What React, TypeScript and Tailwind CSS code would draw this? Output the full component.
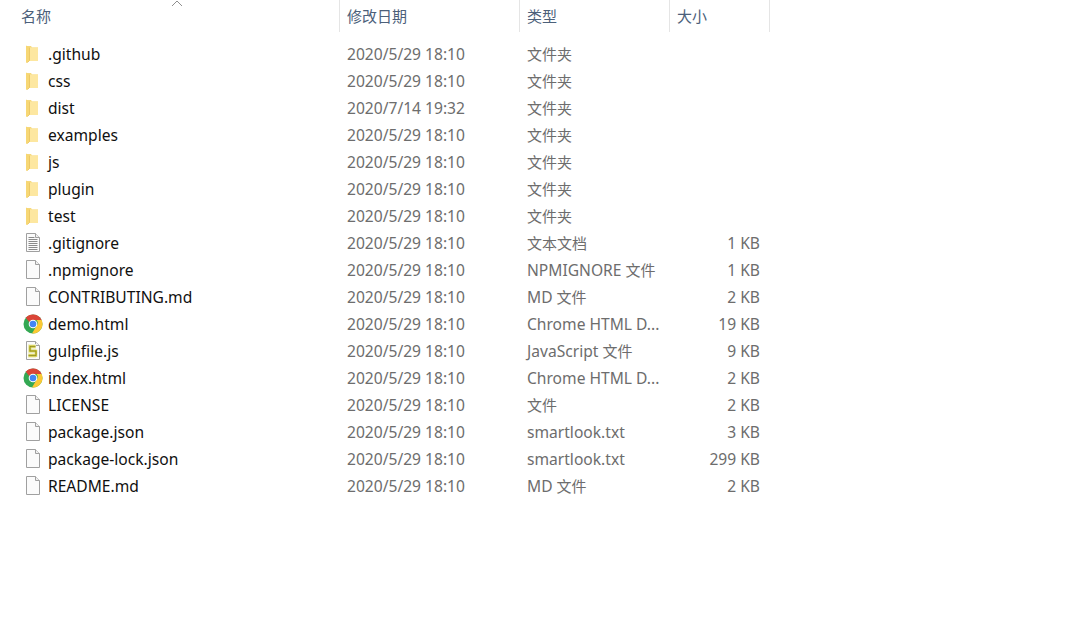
const FONT = "font-['Noto_Sans','Noto_Sans_CJK_SC',sans-serif]";

type Kind = "folder" | "lines" | "blank" | "chrome" | "js";
const rows: [string, string, string, string, Kind][] = [
  [".github", "2020/5/29 18:10", "文件夹", "", "folder"],
  ["css", "2020/5/29 18:10", "文件夹", "", "folder"],
  ["dist", "2020/7/14 19:32", "文件夹", "", "folder"],
  ["examples", "2020/5/29 18:10", "文件夹", "", "folder"],
  ["js", "2020/5/29 18:10", "文件夹", "", "folder"],
  ["plugin", "2020/5/29 18:10", "文件夹", "", "folder"],
  ["test", "2020/5/29 18:10", "文件夹", "", "folder"],
  [".gitignore", "2020/5/29 18:10", "文本文档", "1 KB", "lines"],
  [".npmignore", "2020/5/29 18:10", "NPMIGNORE 文件", "1 KB", "blank"],
  ["CONTRIBUTING.md", "2020/5/29 18:10", "MD 文件", "2 KB", "blank"],
  ["demo.html", "2020/5/29 18:10", "Chrome HTML D...", "19 KB", "chrome"],
  ["gulpfile.js", "2020/5/29 18:10", "JavaScript 文件", "9 KB", "js"],
  ["index.html", "2020/5/29 18:10", "Chrome HTML D...", "2 KB", "chrome"],
  ["LICENSE", "2020/5/29 18:10", "文件", "2 KB", "blank"],
  ["package.json", "2020/5/29 18:10", "smartlook.txt", "3 KB", "blank"],
  ["package-lock.json", "2020/5/29 18:10", "smartlook.txt", "299 KB", "blank"],
  ["README.md", "2020/5/29 18:10", "MD 文件", "2 KB", "blank"],
];

function Mixed({ text }: { text: string }) {
  const parts = text.split(/([\u4e00-\u9fff]+)/);
  return (
    <span className="text-[15.6px] leading-[20px] -translate-y-[1px] inline-block">
      {parts.map((p, i) =>
        i % 2 === 1 ? (
          <span key={i} className="text-[15px]">
            {p}
          </span>
        ) : (
          p
        )
      )}
    </span>
  );
}

function Icon({ kind }: { kind: Kind }) {
  if (kind === "folder")
    return (
      <svg className="mb-[2px]" width="20" height="20" viewBox="0 0 20 20">
        <path d="M3 2h5l1 1.500h6V17H5z" fill="#f5d97e" />
        <path d="M6 3.500h9V17H6z" fill="#fde7a0" />
        <path d="M3 1.500l3.500 2v13L4 19l-1-.5z" fill="#f7d774" />
        <path d="M6.500 3.500v13L4.500 18.500" fill="none" stroke="#e8c25c" strokeWidth=".8" />
      </svg>
    );
  if (kind === "chrome")
    return (
      <svg className="mb-[2px]" width="20" height="20" viewBox="0 0 20 20">
        <circle cx="10" cy="10" r="9.500" fill="#34a853" />
        <path d="M10 .5a9.500 9.500 0 0 1 8.600 5.500H10a4 4 0 0 0-3.600 2.200L2.800 3.800A9.500 9.500 0 0 1 10 .5z" fill="#db4437" />
        <path d="M18.600 6A9.500 9.500 0 0 1 9 19.450L13.400 12A4 4 0 0 0 13.500 6z" fill="#fcc934" />
        <circle cx="10" cy="10" r="4.300" fill="#fff" />
        <circle cx="10" cy="10" r="3.300" fill="#4285f4" />
      </svg>
    );
  return (
    <svg className="mb-[2px]" width="20" height="20" viewBox="0 0 20 20">
      <path d="M3.500.5h9l4 4v14h-13z" fill="#fbfbfb" stroke="#a0a0a0" />
      <path d="M12.500.5v4h4" fill="#f0f0f0" stroke="#a0a0a0" />
      {kind === "lines" && (
        <path d="M5.500 4.500h6M5.500 6.500h9M5.500 8.500h9M5.500 10.500h9M5.500 12.500h9M5.500 14.500h9M5.500 16.500h9" stroke="#8a8a8a" />
      )}
      {kind === "js" && (
        <>
          <rect x="5" y="3" width="8" height="14" fill="#f1f1d4" />
          <path d="M12.500 5.500H7v4.500h6v4.500H5.500" fill="none" stroke="#cfc83a" strokeWidth="2.400" />
          <path d="M12.500 5.500H7v4.500h6v4.500H5.500" fill="none" stroke="#6a6820" strokeWidth=".5" />
        </>
      )}
    </svg>
  );
}

function HeaderCell({ label, className }: { label: string; className: string }) {
  return (
    <div className={`h-8 flex items-center border-r border-[#e5e5e5] text-[15px] text-[#4c607a] ${className}`}>
      {label}
    </div>
  );
}

export default function App() {
  return (
    <div className={`w-[1090px] h-[631px] bg-white overflow-hidden ${FONT}`}>
      <div className="relative flex w-[770px]">
        <HeaderCell label="名称" className="w-[340px] pl-[21px]" />
        <HeaderCell label="修改日期" className="w-[180px] pl-[7px]" />
        <HeaderCell label="类型" className="w-[150px] pl-[7px]" />
        <HeaderCell label="大小" className="w-[100px] pl-[7px]" />
        <svg className="absolute left-[171px] top-0" width="12" height="7" viewBox="0 0 12 7">
          <path d="M1 6l5-5 5 5" fill="none" stroke="#8f8f8f" />
        </svg>
      </div>
      <div className="mt-[9px] w-[770px]">
        {rows.map(([name, date, type, size, kind]) => (
          <div key={name} className="flex items-center h-[27px] text-[#6d6d6d]">
            <div className="w-[340px] flex items-center pl-[23px] gap-[5px] text-[#101010]">
              <Icon kind={kind} />
              <Mixed text={name} />
            </div>
            <div className="w-[180px] pl-[7px]">
              <Mixed text={date} />
            </div>
            <div className="w-[150px] pl-[7px]">
              <Mixed text={type} />
            </div>
            <div className="w-[90px] text-right">
              <Mixed text={size} />
            </div>
          </div>
        ))}
      </div>
    </div>
  );
}
